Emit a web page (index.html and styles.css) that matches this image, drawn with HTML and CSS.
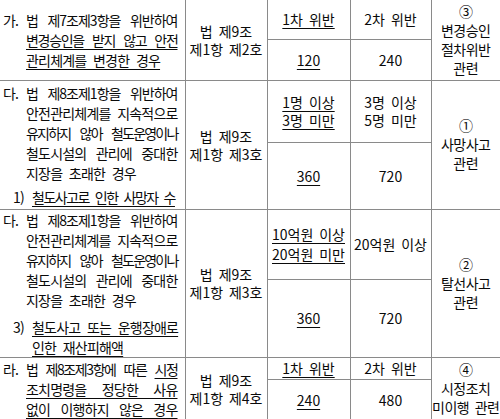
FILE: index.html
```html
<!DOCTYPE html>
<html lang="ko">
<head>
<meta charset="utf-8">
<link rel="stylesheet" href="styles.css">
</head>
<body>
<table class="t">
  <colgroup>
    <col class="c1"><col class="c2"><col class="c3"><col class="c4"><col class="c5">
  </colgroup>
  <tr class="r1a">
    <td rowspan="2" class="desc">
      <div class="item">
        <span class="mk">가.</span>
        <div class="bd">
          <div class="ln j k10">법 제7조제3항을 위반하여</div>
          <div class="ln j k13"><span class="u">변경승인을 받지 않고 안전</span></div>
          <div class="ln"><span class="u">관리체계를 변경한 경우</span></div>
        </div>
      </div>
    </td>
    <td rowspan="2" class="law">법 제9조<br>제1항 제2호</td>
    <td><span class="u">1차 위반</span></td>
    <td>2차 위반</td>
    <td rowspan="2" class="cat">③<br>변경승인<br>절차위반<br>관련</td>
  </tr>
  <tr class="r1b">
    <td><span class="u">120</span></td>
    <td>240</td>
  </tr>
  <tr class="r2a">
    <td rowspan="2" class="desc">
      <div class="item">
        <span class="mk">다.</span>
        <div class="bd">
          <div class="ln j k10">법 제8조제1항을 위반하여</div>
          <div class="ln j">안전관리체계를 지속적으로</div>
          <div class="ln j k18">유지하지 않아 철도운영이나</div>
          <div class="ln j">철도시설의 관리에 중대한</div>
          <div class="ln">지장을 초래한 경우</div>
        </div>
      </div>
      <div class="sub s1">
        <span class="smk">1)</span>
        <div class="bd">
          <div class="ln k15"><span class="u">철도사고로 인한 사망자 수</span></div>
        </div>
      </div>
    </td>
    <td rowspan="2" class="law">법 제9조<br>제1항 제3호</td>
    <td><span class="u">1명 이상</span><br><span class="u">3명 미만</span></td>
    <td>3명 이상<br>5명 미만</td>
    <td rowspan="2" class="cat">①<br>사망사고<br>관련</td>
  </tr>
  <tr class="r2b">
    <td><span class="u">360</span></td>
    <td>720</td>
  </tr>
  <tr class="r3a">
    <td rowspan="2" class="desc">
      <div class="item">
        <span class="mk">다.</span>
        <div class="bd">
          <div class="ln j k10">법 제8조제1항을 위반하여</div>
          <div class="ln j">안전관리체계를 지속적으로</div>
          <div class="ln j k18">유지하지 않아 철도운영이나</div>
          <div class="ln j">철도시설의 관리에 중대한</div>
          <div class="ln">지장을 초래한 경우</div>
        </div>
      </div>
      <div class="sub s3">
        <span class="smk">3)</span>
        <div class="bd">
          <div class="ln j"><span class="u">철도사고 또는 운행장애로</span></div>
          <div class="ln"><span class="u">인한 재산피해액</span></div>
        </div>
      </div>
    </td>
    <td rowspan="2" class="law">법 제9조<br>제1항 제3호</td>
    <td class="wide"><span class="u">10억원 이상</span><br><span class="u">20억원 미만</span></td>
    <td>20억원 이상</td>
    <td rowspan="2" class="cat">②<br>탈선사고<br>관련</td>
  </tr>
  <tr class="r3b">
    <td><span class="u">360</span></td>
    <td>720</td>
  </tr>
  <tr class="r4a">
    <td rowspan="2" class="desc">
      <div class="item">
        <span class="mk">라.</span>
        <div class="bd">
          <div class="ln j k14">법 제8조제3항에 따른 <span class="u">시정</span></div>
          <div class="ln j"><span class="u">조치명령을 정당한 사유</span></div>
          <div class="ln j"><span class="u">없이 이행하지 않은 경우</span></div>
        </div>
      </div>
    </td>
    <td rowspan="2" class="law">법 제9조<br>제1항 제4호</td>
    <td><span class="u">1차 위반</span></td>
    <td>2차 위반</td>
    <td rowspan="2" class="cat">④<br>시정조치<br>미이행 관련</td>
  </tr>
  <tr class="r4b">
    <td><span class="u">240</span></td>
    <td>480</td>
  </tr>
</table>
</body>
</html>
```

FILE: styles.css
```css
html, body {
  margin: 0;
  padding: 0;
  overflow: hidden;
  background: #fff;
}
body {
  font-family: "Noto Sans CJK KR", "Noto Sans", sans-serif;
  font-size: 14px;
  letter-spacing: 0;
  word-spacing: 2px;
  color: #0a0a0a;
}
.t {
  border-collapse: collapse;
  table-layout: fixed;
  width: 500px;
}
.c1 { width: 185px; }
.c2 { width: 82px; }
.c3 { width: 83px; }
.c4 { width: 81px; }
.c5 { width: 69px; }
td {
  border: 1px solid #8a8a8a;
  padding: 0;
  text-align: center;
  vertical-align: middle;
  line-height: 18px;
}
.r1a td { border-top: none; }
.desc {
  border-left: none;
  text-align: left;
  padding: 0 7px 0 3px;
  line-height: 20px;
  letter-spacing: -0.8px;
  word-spacing: 3.5px;
}
.cat { border-right: none; line-height: 19px; letter-spacing: -0.5px; }
.r1a { height: 39px; }
.r1b { height: 41px; }
.r2a { height: 62px; }
.r2b { height: 67px; }
.r3a { height: 70px; }
.r3b { height: 78px; }
.r4a { height: 22px; }
.r4b { height: 41px; }
.item, .sub { display: flex; }
.mk { width: 23px; flex: none; }
.smk { width: 19px; flex: none; }
.bd { flex: 1; min-width: 0; }
.ln { white-space: nowrap; }
.j { text-align: justify; text-align-last: justify; }
.k10 { letter-spacing: -1px; }
.k13 { letter-spacing: -1.3px; }
.k14 { letter-spacing: -1.4px; }
.k15 { letter-spacing: -1.5px; }
.k18 { letter-spacing: -1.8px; }
.sub { padding-left: 10px; }
.s1 { margin-top: 4px; }
.s3 { margin-top: 7px; }
.u { text-decoration: underline; text-underline-offset: 3px; text-decoration-thickness: 1px; }
.law { line-height: 18px; }
.wide { line-height: 20px; }
```
